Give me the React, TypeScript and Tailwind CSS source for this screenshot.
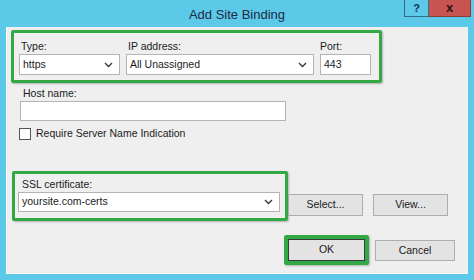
const font = { fontFamily: '"Liberation Sans", Arial, sans-serif' };

function Chevron() {
  return (
    <svg width="9" height="6" viewBox="0 0 9 6" className="shrink-0">
      <polyline points="1,1 4.5,4.5 8,1" fill="none" stroke="#333" strokeWidth="1.3" />
    </svg>
  );
}

function Select({ value, className }: { value: string; className: string }) {
  return (
    <div
      className={`flex items-center justify-between bg-white border border-[#b4b4b4] pl-[3px] pr-[6px] text-[10.5px] text-[#1b1b1b] ${className}`}
    >
      <span>{value}</span>
      <Chevron />
    </div>
  );
}

function Button({ label, className }: { label: string; className: string }) {
  return (
    <div
      className={`flex items-center justify-center bg-[#e3e3e3] border border-[#adadad] text-[10.5px] text-[#1b1b1b] ${className}`}
    >
      {label}
    </div>
  );
}

export default function App() {
  return (
    <div className="w-[474px] h-[280px] bg-[#5dc9e9] flex flex-col overflow-hidden" style={font}>
      {/* Title bar */}
      <div className="h-[27px] flex items-start pl-[70px] pr-[3px]">
        <div className="flex-1 text-center text-[13px] text-[#1d2b45] pt-[5px]">Add Site Binding</div>
        <div className="flex h-[17px]">
          <div className="w-[25px] h-full bg-[#5dc9e9] border border-[#2f6f8c] border-t-0 flex items-center justify-center text-[11px] font-bold text-[#14304a]">
            ?
          </div>
          <div className="w-[42px] h-full bg-[#c75450] border border-[#8e3b35] border-t-0 border-l-0 flex items-center justify-center text-[13px] font-bold text-[#2a1515] leading-none pb-[1px]">
            x
          </div>
        </div>
      </div>

      {/* Client area */}
      <div className="mx-[6px] h-[247px] bg-[#efefef] border-l border-b border-[#fafafa] flex flex-col text-[10.5px] text-[#1b1b1b]">
        {/* Type / IP / Port */}
        <div className="ml-[4px] mt-[3px] w-[371px] h-[53px] border-[3px] border-[#33a845] rounded-[2px] shadow-[1px_1px_2px_rgba(0,0,0,0.25)] pl-[5px] pt-[6px] flex gap-[7px]">
          <div className="flex flex-col w-[101px]">
            <span className="pl-[2px] h-[15px] leading-[14px]">Type:</span>
            <Select value="https" className="h-[21px]" />
          </div>
          <div className="flex flex-col w-[188px] -ml-[1px]">
            <span className="pl-[2px] h-[15px] leading-[14px]">IP address:</span>
            <Select value="All Unassigned" className="h-[21px]" />
          </div>
          <div className="flex flex-col w-[51px] -ml-[1px]">
            <span className="h-[15px] leading-[14px]">Port:</span>
            <div className="h-[21px] bg-white border border-[#b4b4b4] pl-[3px] flex items-center">443</div>
          </div>
        </div>

        {/* Host name */}
        <div className="ml-[13px] mt-[4px] flex flex-col">
          <span className="pl-[3px] h-[13px] leading-[13px]">Host name:</span>
          <div className="mt-[1px] w-[266px] h-[20px] bg-white border border-[#b4b4b4]" />
        </div>

        <label className="ml-[12px] mt-[5px] flex items-center gap-[5px]">
          <span className="w-[12px] h-[12px] bg-white border border-[#555]" />
          <span>Require Server Name Indication</span>
        </label>

        {/* SSL certificate row */}
        <div className="mt-[29px] flex items-end">
          <div className="ml-[5px] w-[276px] h-[50px] border-[3px] border-[#33a845] rounded-[2px] shadow-[1px_1px_2px_rgba(0,0,0,0.25)] pl-[3px] pt-[3px] flex flex-col">
            <span className="pl-[4px] h-[15px] leading-[14px]">SSL certificate:</span>
            <Select value="yoursite.com-certs" className="w-[262px] h-[20px]" />
          </div>
          <div className="flex gap-[10px] mb-[5px]">
            <Button label="Select..." className="w-[75px] h-[22px]" />
            <Button label="View..." className="w-[75px] h-[22px]" />
          </div>
        </div>

        {/* OK / Cancel */}
        <div className="mt-[14px] flex items-center justify-end pr-[13px] gap-[6px]">
          <div className="border-[4px] border-[#33a845] rounded-[2px] shadow-[1px_1px_2px_rgba(0,0,0,0.25)]">
            <Button label="OK" className="w-[77px] h-[22px] !border-[#3a3a3a]" />
          </div>
          <Button label="Cancel" className="w-[80px] h-[21px] mt-[2px]" />
        </div>
      </div>
    </div>
  );
}
